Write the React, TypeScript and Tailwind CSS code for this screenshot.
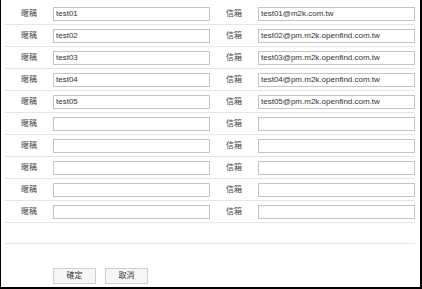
import React from "react";

const rows = [
  { nick: "test01", mail: "test01@m2k.com.tw" },
  { nick: "test02", mail: "test02@pm.m2k.openfind.com.tw" },
  { nick: "test03", mail: "test03@pm.m2k.openfind.com.tw" },
  { nick: "test04", mail: "test04@pm.m2k.openfind.com.tw" },
  { nick: "test05", mail: "test05@pm.m2k.openfind.com.tw" },
  { nick: "", mail: "" },
  { nick: "", mail: "" },
  { nick: "", mail: "" },
  { nick: "", mail: "" },
  { nick: "", mail: "" },
];

const cjk = { fontFamily: '"Liberation Sans", "Noto Sans CJK TC", sans-serif' };

function Field({ value }: { value: string }) {
  return (
    <input
      type="text"
      defaultValue={value}
      className="h-[14px] w-[157px] border border-[#c4c4c4] bg-white px-[2px] text-[8px] leading-none text-[#333] outline-none"
      style={cjk}
    />
  );
}

export default function App() {
  return (
    <div
      className="h-[289px] w-[422px] border-b-2 border-l border-r-2 border-black bg-white pt-[3px]"
      style={cjk}
    >
      <div className="ml-[4px] mr-[5px]">
        {rows.map((r, i) => (
          <div key={i} className="flex h-[22px] items-center border-b border-[#e6e6e6]">
            <span className="w-[48px] text-center text-[8px] text-[#444]">暱稱</span>
            <Field value={r.nick} />
            <span className="w-[48px] text-center text-[8px] text-[#444]">信箱</span>
            <Field value={r.mail} />
          </div>
        ))}
        <div className="h-[21px] border-b border-[#e6e6e6]" />
        <div className="flex gap-[9px] pl-[48px] pt-[24px]">
          <button
            type="button"
            className="h-[16px] w-[43px] border border-[#cfcfcf] bg-[#f6f6f6] text-[8px] text-[#333]"
          >
            確定
          </button>
          <button
            type="button"
            className="h-[16px] w-[43px] border border-[#cfcfcf] bg-[#f6f6f6] text-[8px] text-[#333]"
          >
            取消
          </button>
        </div>
      </div>
    </div>
  );
}
